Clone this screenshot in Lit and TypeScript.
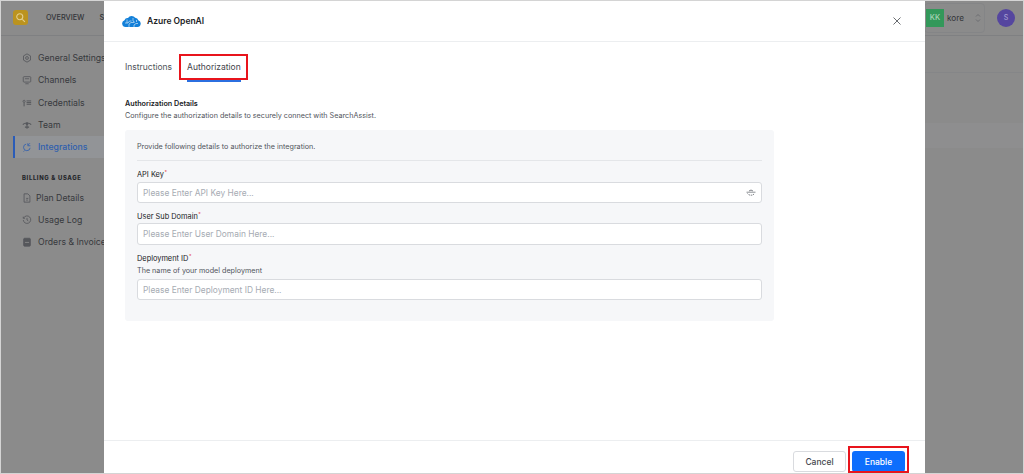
import { LitElement, html, css, svg } from "lit";
import { customElement } from "lit/decorators.js";

const icon = (body: unknown) => html`<svg class="nav-icon" viewBox="0 0 12 12" fill="none" stroke="currentColor" stroke-width="1">${body}</svg>`;

const icons = {
  gear: svg`<circle cx="6" cy="6" r="1.7"/><path d="M6 1l4.200 2.500v5L6 11 1.800 8.500v-5z"/>`,
  chat: svg`<rect x="1.500" y="2" width="9" height="6.500" rx="1"/><path d="M4 10.500h4M3.500 4.500h5"/>`,
  cred: svg`<circle cx="2.500" cy="4" r="1.300"/><path d="M2.500 5.500V10M5.500 3.500h5.500M5.500 5.500h5.500M5.500 7.500h5.500" stroke-width="1.200"/>`,
  team: svg`<path d="M1 5.500C3 3 9 3 11 5.500M6 5v5.500M3.500 8.500h5" stroke-width="1.300"/><circle cx="6" cy="4.500" r="1.300" fill="currentColor"/>`,
  integ: svg`<path d="M5 2.500A4 4 0 1 0 9.800 7M3 10.500L1.800 11.500M7 1.500v3h3M9.500 1.500L7.500 3.500"/>`,
  doc: svg`<path d="M2.500 1h4.500l2.500 2.500V11h-7zM5 6.500h2.500M5 8.500h2"/>`,
  clock: svg`<path d="M2 3.500A4.500 4.500 0 1 1 1.500 6M1.500 2v2h2M6 3.500V6l1.500 1"/>`,
  orders: svg`<rect x="2" y="1.500" width="8" height="9.500" rx="1.200" fill="currentColor"/><path d="M3.500 6.500h5" stroke="#8b8b8b"/>`,
};

@customElement("app-root")
export class AppRoot extends LitElement {
  static styles = css`
    :host { display: block; width: 1024px; height: 474px; font-family: Inter, "Liberation Sans", sans-serif; }
    .root { position: relative; width: 1024px; height: 474px; overflow: hidden; background: #8b8b8b; color: #202124; }
    .page { display: flex; flex-direction: column; height: 100%; }
    .topbar { display: flex; align-items: center; height: 36px; padding: 0 9px 0 13px; border-bottom: 1px solid #7f8082; box-sizing: border-box; flex: none; }
    .brand { width: 15px; height: 15px; border-radius: 3px; background: #bb931f; display: flex; align-items: center; justify-content: center; margin-right: 18px; }
    .brand svg { width: 11px; height: 11px; }
    .topnav { font-size: 7.300px; font-weight: 500; color: #333539; display: flex; gap: 15px; }
    .org { margin-left: auto; display: flex; align-items: center; height: 30px; width: 61px; border: 1px solid #848587; border-radius: 4px; box-sizing: border-box; margin-right: 12px; }
    .kk { width: 18px; height: 18px; background: #33985a; color: #a8d4b6; font-size: 7.500px; display: flex; align-items: center; justify-content: center; margin-left: 1px; font-weight: 500; }
    .org-name { font-size: 8.200px; color: #333539; margin-left: 3px; }
    .chev { width: 6px; height: 10px; margin-left: 11px; color: #636569; }
    .avatar { width: 18px; height: 18px; border-radius: 50%; background: #55469f; color: #a49cd0; font-size: 7px; display: flex; align-items: center; justify-content: center; font-weight: 500; }
    .lower { display: flex; flex: 1; min-height: 0; }
    .side { width: 200px; padding: 11px 0 0 13px; box-sizing: border-box; flex: none; }
    .nav-item { display: flex; align-items: center; height: 22.300px; font-size: 8.700px; color: #37393d; padding-left: 9px; gap: 6px; white-space: nowrap; }
    .nav-item.active { color: #2f5fae; background: #929497; border-left: 2px solid #2a5cb8; padding-left: 7px; font-weight: 500; }
    .nav-icon { width: 10px; height: 10px; color: #55575b; flex: none; }
    .active .nav-icon { color: #2f5fae; }
    .nav-item.doc { gap: 4px; }
    .group { font-size: 5.900px; font-weight: 800; letter-spacing: 0.65px; color: #26282c; padding: 16px 0 4px 9px; line-height: 8px; }
    .content { flex: 1; display: flex; flex-direction: column; padding-top: 36px; }
    .band-a { height: 1px; background: #858688; }
    .band-b { height: 25px; margin-top: 50px; background: #8e8e8f; }
    .frame { position: absolute; inset: 0; border: 1px solid #d4d4d4; pointer-events: none; }

    .modal { position: absolute; left: 104px; top: 1px; width: 821px; height: 472px; background: #fff; display: flex; flex-direction: column; }
    .m-head { height: 41px; box-sizing: border-box; border-bottom: 1px solid #eceef0; display: flex; align-items: center; padding: 0 24px 1px 18px; flex: none; }
    .m-head .logo { width: 19px; height: 12px; flex: none; }
    .m-title { font-size: 8.500px; font-weight: 600; color: #202124; margin-left: 6px; }
    .close { margin-left: auto; width: 8px; height: 8px; color: #44474d; }
    .m-body { flex: 1; padding: 0 21px; min-height: 0; }
    .tabs { display: flex; gap: 15px; margin-top: 12px; height: 28px; }
    .tab { font-size: 8.500px; line-height: 26px; height: 28px; box-sizing: border-box; color: #50545b; }
    .tab.on { color: #3f434a; border-bottom: 2px solid #2b6fe0; }
    .d-title { font-size: 7.200px; font-weight: 600; line-height: 12px; margin-top: 16px; color: #202124; }
    .d-sub { font-size: 7.200px; line-height: 11px; color: #50545b; }
    .panel { width: 649px; height: 191px; box-sizing: border-box; background: #f6f7f9; border-radius: 3px; margin-top: 9px; padding: 11px 12px 0; }
    .p-intro { font-size: 7.200px; line-height: 12px; color: #50545b; }
    .rule { height: 1px; background: #e4e6e9; margin-top: 7px; }
    .label { font-size: 7.400px; line-height: 12px; color: #202124; margin-top: 8px; }
    .label sup { color: #e5484d; font-size: 5px; line-height: 0; vertical-align: 3px; margin-left: 0.500px; }
    .help { font-size: 7.200px; line-height: 12px; color: #50545b; }
    .field { position: relative; height: 21px; margin-top: 1px; }
    .field.gap1 { height: 22px; margin-top: 0; }
    .field.gap3 { margin-top: 2px; }
    input { display: block; width: 100%; height: 100%; box-sizing: border-box; border: 1px solid #d9dbdf; border-radius: 3px; background: #fff; padding: 0 5px; font: 400 8.400px Inter, "Liberation Sans", sans-serif; outline: none; }
    input::placeholder { color: #a6abb3; opacity: 1; }
    .eye { position: absolute; right: 6px; top: 6px; width: 10px; height: 9px; color: #5d6168; }
    .m-foot { height: 33px; box-sizing: border-box; border-top: 1px solid #eceef0; display: flex; justify-content: flex-end; align-items: flex-start; gap: 6px; padding: 10px 20px 0 0; flex: none; }
    .btn { height: 21px; box-sizing: border-box; font: 500 8.500px Inter, "Liberation Sans", sans-serif; border-radius: 3px; display: flex; align-items: center; justify-content: center; padding: 0; }
    .cancel { width: 53px; background: #fff; border: 1px solid #d9dbdf; color: #44474d; }
    .enable { width: 53px; background: #0d6efd; border: none; color: #fff; }
    .mark { position: absolute; border: 2px solid #e8141c; box-sizing: border-box; pointer-events: none; }
    .mark.tab-mark { left: 179px; top: 54px; width: 69px; height: 26px; }
    .mark.btn-mark { left: 848px; top: 446px; width: 61px; height: 27px; }
  `;

  render() {
    return html`<div class="root">
      <div class="page">
        <div class="topbar">
          <div class="brand"><svg viewBox="0 0 12 12" fill="none" stroke="#e3cf8e" stroke-width="1.200"><circle cx="5.200" cy="5.200" r="3.300"/><path d="M8 8l2.800 2.800"/></svg></div>
          <div class="topnav"><span>OVERVIEW</span><span>SEARCH</span></div>
          <div class="org">
            <div class="kk">KK</div><span class="org-name">kore</span>
            <svg class="chev" viewBox="0 0 6 10" fill="none" stroke="currentColor" stroke-width="0.800"><path d="M1 3.500L3 1.500l2 2M1 6.500l2 2 2-2"/></svg>
          </div>
          <div class="avatar">S</div>
        </div>
        <div class="lower">
          <div class="side">
            <div class="nav-item">${icon(icons.gear)}General Settings</div>
            <div class="nav-item">${icon(icons.chat)}Channels</div>
            <div class="nav-item">${icon(icons.cred)}Credentials</div>
            <div class="nav-item">${icon(icons.team)}Team</div>
            <div class="nav-item active">${icon(icons.integ)}Integrations</div>
            <div class="group">BILLING &amp; USAGE</div>
            <div class="nav-item doc">${icon(icons.doc)}Plan Details</div>
            <div class="nav-item">${icon(icons.clock)}Usage Log</div>
            <div class="nav-item">${icon(icons.orders)}Orders &amp; Invoices</div>
          </div>
          <div class="content"><div class="band-a"></div><div class="band-b"></div></div>
        </div>
      </div>
      <div class="frame"></div>

      <div class="modal">
        <div class="m-head">
          <svg class="logo" viewBox="0 0 19 12">
            <path fill="#1380d9" d="M3.500 12A3.500 3.500 0 0 1 2.500 5.200 3.300 3.300 0 0 1 6 3 4.300 4.300 0 0 1 13.200 2.800 3.300 3.300 0 0 1 16.300 5.200 3.500 3.500 0 0 1 15.500 12z"/>
            <path fill="none" stroke="#fff" stroke-width="0.550" d="M3 8h3l1.500-2h2M7 12V9l2-1.500h3M12 12v-2l2-1.500h2M11 3v3l2 1.500M5 4.500v3.500M14.500 5v2"/>
          </svg>
          <div class="m-title">Azure OpenAI</div>
          <svg class="close" viewBox="0 0 8 8" fill="none" stroke="currentColor" stroke-width="0.800"><path d="M.5.500l7 7M7.500.500l-7 7"/></svg>
        </div>
        <div class="m-body">
          <div class="tabs"><div class="tab">Instructions</div><div class="tab on">Authorization</div></div>
          <div class="d-title">Authorization Details</div>
          <div class="d-sub">Configure the authorization details to securely connect with SearchAssist.</div>
          <div class="panel">
            <div class="p-intro">Provide following details to authorize the integration.</div>
            <div class="rule"></div>
            <div class="label">API Key<sup>*</sup></div>
            <div class="field">
              <input placeholder="Please Enter API Key Here..." />
              <svg class="eye" viewBox="0 0 10 9" fill="none" stroke="currentColor" stroke-width="0.800"><path d="M3 3.200C4 1.800 6 1.800 7 3.200"/><path d="M.5 4.200h9" stroke-width="0.700"/><path d="M1.500 5.500C3 7.800 7 7.800 8.500 5.500" stroke-dasharray="1.300 0.700"/></svg>
            </div>
            <div class="label">User Sub Domain<sup>*</sup></div>
            <div class="field gap1"><input placeholder="Please Enter User Domain Here..." /></div>
            <div class="label">Deployment ID<sup>*</sup></div>
            <div class="help">The name of your model deployment</div>
            <div class="field gap3"><input placeholder="Please Enter Deployment ID Here..." /></div>
          </div>
        </div>
        <div class="m-foot">
          <button class="btn cancel">Cancel</button>
          <button class="btn enable">Enable</button>
        </div>
      </div>
      <div class="mark tab-mark"></div>
      <div class="mark btn-mark"></div>
    </div>`;
  }
}
